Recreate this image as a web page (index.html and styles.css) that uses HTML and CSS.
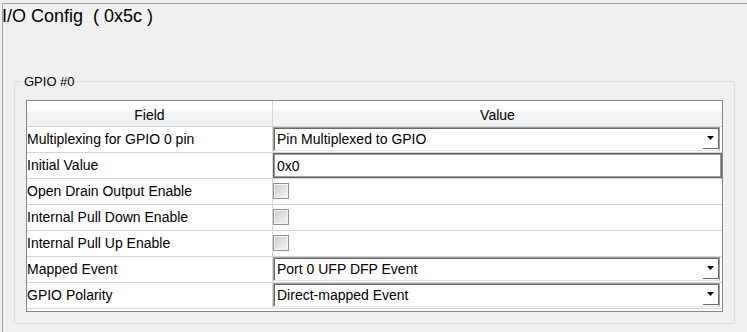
FILE: index.html
```html
<!DOCTYPE html>
<html lang="en">
<head>
  <meta charset="UTF-8" />
  <title>I/O Config</title>
  <link rel="stylesheet" href="styles.css">
</head>
<body>
  <div class="frame">
    <div class="title">I/O Config  ( 0x5c )</div>

    <fieldset class="group">
      <legend>GPIO #0</legend>
      <div class="grid">
        <table>
          <thead>
            <tr>
              <th class="field-col">Field</th>
              <th>Value</th>
            </tr>
          </thead>
          <tbody>
            <tr>
              <td class="name">Multiplexing for GPIO 0 pin</td>
              <td>
                <div class="combo">
                  <span class="combo-text">Pin Multiplexed to GPIO</span>
                  <span class="drop"><svg width="7" height="4" viewBox="0 0 7 4"><polygon points="0,0 7,0 3.5,4" fill="#000"/></svg></span>
                </div>
              </td>
            </tr>
            <tr>
              <td class="name">Initial Value</td>
              <td><input class="text" type="text" value="0x0"></td>
            </tr>
            <tr>
              <td class="name">Open Drain Output Enable</td>
              <td><input class="check" type="checkbox"></td>
            </tr>
            <tr>
              <td class="name">Internal Pull Down Enable</td>
              <td><input class="check" type="checkbox"></td>
            </tr>
            <tr>
              <td class="name">Internal Pull Up Enable</td>
              <td><input class="check" type="checkbox"></td>
            </tr>
            <tr>
              <td class="name">Mapped Event</td>
              <td>
                <div class="combo">
                  <span class="combo-text">Port 0 UFP DFP Event</span>
                  <span class="drop"><svg width="7" height="4" viewBox="0 0 7 4"><polygon points="0,0 7,0 3.5,4" fill="#000"/></svg></span>
                </div>
              </td>
            </tr>
            <tr>
              <td class="name">GPIO Polarity</td>
              <td>
                <div class="combo">
                  <span class="combo-text">Direct-mapped Event</span>
                  <span class="drop"><svg width="7" height="4" viewBox="0 0 7 4"><polygon points="0,0 7,0 3.5,4" fill="#000"/></svg></span>
                </div>
              </td>
            </tr>
          </tbody>
        </table>
      </div>
    </fieldset>
  </div>
</body>
</html>
```

FILE: styles.css
```css
body {
  margin: 0;
  background: #f0f0f0;
  font-family: 'Liberation Sans', Arial, sans-serif;
  color: #000;
  overflow: hidden;
}
.frame {
  margin: 3px 0 0 2px;
  height: 340px;
  border-top: 1px solid #a0a0a0;
  border-left: 1px solid #a0a0a0;
}
.title {
  font-size: 18px;
  line-height: 21px;
  margin: 2px 0 0 -1px;
  white-space: pre;
}
.group {
  box-sizing: border-box;
  width: 721px;
  min-width: 0;
  margin: 47px 0 0 11px;
  padding: 11px 11px 11px 11px;
  border: 1px solid #d5dfe5;
  border-radius: 3px;
}
.group legend {
  font-size: 13px;
  line-height: 15px;
  padding: 0 2px;
  margin-left: -4px;
}
.grid {
  background: #fff;
  border: 1px solid #828790;
  padding-bottom: 2px;
}
table {
  width: 100%;
  border-collapse: separate;
  border-spacing: 0;
  table-layout: fixed;
  font-size: 14px;
}
th {
  height: 22px;
  padding: 3px 0 0 0;
  font-weight: normal;
  text-align: center;
  background: linear-gradient(#ffffff 35%, #f2f3f5 48%);
  border-bottom: 1px solid #d5d5d5;
}
.field-col {
  width: 245px;
  border-right: 1px solid #d5d5d5;
}
td {
  height: 25px;
  padding: 0;
  border-bottom: 1px solid #d5d5d5;
  vertical-align: top;
}
td.name {
  border-right: 1px solid #d5d5d5;
  line-height: 25px;
  vertical-align: middle;
}
.combo {
  display: flex;
  box-sizing: border-box;
  height: 24px;
  margin-right: 2px;
  border: 1px solid;
  border-color: #a0a0a0 #a0a0a0 #e3e3e3 #a0a0a0;
  box-shadow: inset 1px 1px 0 #696969;
  background: #fff;
}
.combo-text {
  flex: 1;
  padding-left: 3px;
  line-height: 22px;
}
.drop {
  display: flex;
  align-items: center;
  justify-content: center;
  box-sizing: border-box;
  width: 16px;
  height: 21px;
  margin-top: 0;
  border-right: 1px solid #696969;
  border-bottom: 1px solid #696969;
}
.text {
  box-sizing: border-box;
  width: 100%;
  height: 25px;
  margin: 0;
  padding: 0 0 0 3px;
  border: 1px solid #646464;
  box-shadow: inset 0 0 0 1px #9a9a9a;
  font: 14px 'Liberation Sans', Arial, sans-serif;
  color: #000;
  outline: none;
}
.check {
  appearance: none;
  -webkit-appearance: none;
  box-sizing: border-box;
  display: block;
  width: 16px;
  height: 16px;
  margin: 4px 0 0 0;
  border: 1px solid #8e8f8f;
  background: linear-gradient(135deg, #c9cacb, #f7f7f7);
  box-shadow: inset 0 0 0 1px #f4f4f4;
}
```
